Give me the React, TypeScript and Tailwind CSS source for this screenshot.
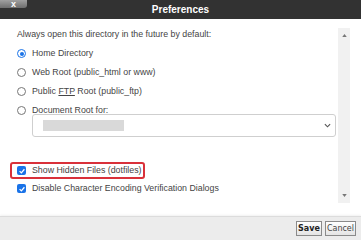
import React from 'react';

function Radio({ checked }: { checked?: boolean }) {
  return checked ? (
    <span className="flex h-[9px] w-[9px] items-center justify-center rounded-full border-[1.5px] border-[#1a73e8] bg-white">
      <span className="h-[4px] w-[4px] rounded-full bg-[#1a73e8]" />
    </span>
  ) : (
    <span className="h-[9px] w-[9px] rounded-full border border-[#767676] bg-white" />
  );
}

function Check() {
  return (
    <span className="flex h-[9px] w-[9px] items-center justify-center rounded-[2px] bg-[#1a73e8]">
      <svg viewBox="0 0 10 10" className="h-[8px] w-[8px]">
        <path d="M2 5.2 L4.2 7.3 L8 2.8" fill="none" stroke="white" strokeWidth="1.6" />
      </svg>
    </span>
  );
}

const options = [
  { label: 'Home Directory', checked: true },
  { label: 'Web Root (public_html or www)' },
  { label: 'Public FTP Root (public_ftp)', ftp: true },
  { label: 'Document Root for:' },
];

export default function App() {
  return (
    <div className="relative flex h-[240px] w-[361px] flex-col overflow-hidden bg-white font-['Liberation_Sans',Arial,sans-serif] text-[8.8px] text-[#444]">
      {/* Title bar */}
      <div className="relative flex h-[19px] items-center justify-center bg-[#323232]">
        <span className="text-[10px] font-bold text-white">Preferences</span>
        <div className="absolute left-0 top-0 flex h-[8px] w-[27px] items-end justify-center rounded-br-[3px] bg-gradient-to-b from-[#a0a0a0] to-[#6e6e6e]">
          <span className="text-[9px] font-bold leading-[8px] text-white">x</span>
        </div>
      </div>

      {/* Body */}
      <div className="flex flex-1">
        <div className="flex-1 pl-[17px] pt-[8px]">
          <p className="whitespace-nowrap leading-[14px]">Always open this directory in the future by default:</p>
          <div className="mt-[3px] flex flex-col">
            {options.map((o) => (
              <div key={o.label} className="flex h-[19px] items-center gap-[6px] whitespace-nowrap">
                <Radio checked={o.checked} />
                <span>
                  {o.ftp ? (
                    <>
                      Public <span className="underline">FTP</span> Root (public_ftp)
                    </>
                  ) : (
                    o.label
                  )}
                </span>
              </div>
            ))}
          </div>
          <div className="-mt-[6px] ml-[15px] flex h-[23px] w-[304px] items-center justify-between rounded-[3px] border border-[#cfcfcf] pl-[10px] pr-[4px]">
            <span className="h-[11px] w-[81px] bg-[#d9d9d9]" />
            <svg viewBox="0 0 8 5" className="h-[5px] w-[7px]">
              <path d="M1 1 L4 4 L7 1" fill="none" stroke="#555" strokeWidth="1.3" />
            </svg>
          </div>

          <div className="mt-[25px] -ml-[7px] flex h-[17px] w-[135px] items-center gap-[6px] whitespace-nowrap rounded-[3px] border-2 border-[#d9313a] pl-[5px]">
            <Check />
            <span>Show Hidden Files (dotfiles)</span>
          </div>
          <div className="mt-[1px] flex h-[17px] items-center gap-[6px] whitespace-nowrap">
            <Check />
            <span>Disable Character Encoding Verification Dialogs</span>
          </div>
        </div>

        {/* Scrollbar */}
        <div className="mr-[11px] mt-[9px] mb-[13px] flex w-[12px] flex-col items-center justify-between bg-[#f1f1f1] py-[6px]">
          <svg viewBox="0 0 6 4" className="h-[3px] w-[5px]">
            <path d="M0 4 L3 0 L6 4 Z" fill="#777" />
          </svg>
          <svg viewBox="0 0 6 4" className="h-[3px] w-[5px]">
            <path d="M0 0 L3 4 L6 0 Z" fill="#777" />
          </svg>
        </div>
      </div>

      {/* Footer */}
      <div className="flex h-[24px] items-center justify-end gap-[3px] border-t border-[#dcdcdc] bg-[#ececec] pr-[5px] shadow-[0_-1px_2px_rgba(0,0,0,0.06)]">
        <button className="flex h-[15px] items-center border border-[#8a8a8a] bg-gradient-to-b from-white to-[#e4e4e4] px-[1px] font-['DejaVu_Sans',Verdana,sans-serif] text-[8px] font-bold leading-none text-[#222]">
          Save
        </button>
        <button className="flex h-[15px] items-center border border-[#8a8a8a] bg-gradient-to-b from-white to-[#e4e4e4] px-[1px] font-['DejaVu_Sans',Verdana,sans-serif] text-[8px] leading-none text-[#444]">
          Cancel
        </button>
      </div>
    </div>
  );
}
